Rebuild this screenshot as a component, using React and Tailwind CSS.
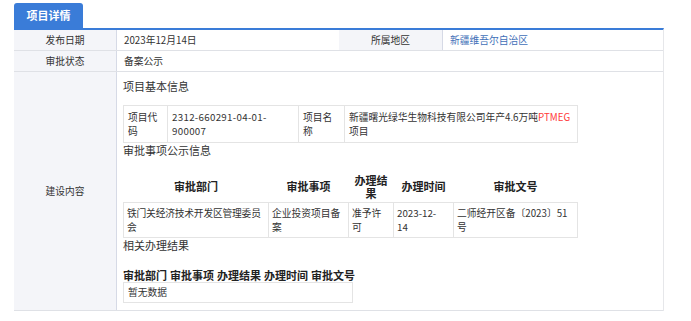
const font = { fontFamily: '"Noto Sans CJK SC", "Noto Sans", sans-serif' };

function Row({ label, children, className = '' }) {
  return (
    <div className={`flex border-b border-[#dfe1e6] ${className}`}>
      <div className="w-[103px] shrink-0 bg-[#f4f5f9] border-r border-[#d6dae6] flex items-center justify-center">
        {label}
      </div>
      {children}
    </div>
  );
}

export default function App() {
  return (
    <div className="bg-white min-h-[321px] pt-[3px] pl-[14px] text-[9.75px] text-[#333]" style={font}>
      <div className="w-[650px]">
        {/* tab */}
        <div className="w-[69px] h-[25px] rounded-t-[3px] bg-[#3a7cd8] text-white text-[11px] font-bold flex items-center justify-center">
          项目详情
        </div>

        <div className="border-t-2 border-[#3a7cd8] border-r border-r-[#e6e7ea]">
          <Row label="发布日期" className="h-[21px]">
            <div className="w-[222px] pl-[7px] flex items-center">2023年12月14日</div>
            <div className="w-[104px] bg-[#f4f5f9] border-r border-[#d6dae6] flex items-center justify-center">所属地区</div>
            <div className="flex-1 pl-[7px] flex items-center text-[#3f70b8]">新疆维吾尔自治区</div>
          </Row>

          <Row label="审批状态" className="h-[21px]">
            <div className="flex-1 pl-[7px] flex items-center">备案公示</div>
          </Row>

          <Row label="建设内容" className="h-[239px]">
            <div className="flex-1 pl-[6px] pt-[7px] flex flex-col">
              <p className="text-[11px] leading-[14px]">项目基本信息</p>

              <table className="mt-[12px] border-collapse table-fixed w-[455px] leading-[14px]">
                <tbody>
                  <tr>
                    <td className="w-[44px] border border-[#e4e4e4] px-[4px] py-[4px] align-top">项目代码</td>
                    <td className="w-[131px] border border-[#e4e4e4] px-[4px] py-[4px] align-top tracking-[0.3px]">2312-660291-04-01-<br />900007</td>
                    <td className="w-[46px] border border-[#e4e4e4] px-[4px] py-[4px] align-top">项目名称</td>
                    <td className="border border-[#e4e4e4] px-[4px] py-[4px] align-top">
                      新疆曙光绿华生物科技有限公司年产4.6万吨<span className="text-[#ff3b3b]">PTMEG</span>项目
                    </td>
                  </tr>
                </tbody>
              </table>

              <p className="text-[11px] leading-[14px]">审批事项公示信息</p>

              <table className="mt-[15px] border-collapse table-fixed w-[455px]">
                <thead>
                  <tr className="h-[30px] text-[11px] font-bold leading-[13px] text-[#222]">
                    <th className="w-[145px] px-[3px]">审批部门</th>
                    <th className="w-[80px] px-[3px]">审批事项</th>
                    <th className="w-[45px] px-[4px]">办理结果</th>
                    <th className="w-[60px] px-[3px]">办理时间</th>
                    <th className="px-[3px]">审批文号</th>
                  </tr>
                </thead>
                <tbody className="leading-[14px]">
                  <tr>
                    <td className="border border-[#e4e4e4] pl-[3px] pr-[1px] py-[3px] align-top whitespace-nowrap tracking-[-0.2px]">铁门关经济技术开发区管理委员<br />会</td>
                    <td className="border border-[#e4e4e4] px-[3px] py-[3px] align-top">企业投资项目备案</td>
                    <td className="border border-[#e4e4e4] px-[3px] py-[3px] align-top">准予许可</td>
                    <td className="border border-[#e4e4e4] px-[3px] py-[3px] align-top">2023-12-<br />14</td>
                    <td className="border border-[#e4e4e4] px-[3px] py-[3px] align-top">二师经开区备〔2023〕51号</td>
                  </tr>
                </tbody>
              </table>

              <p className="text-[11px] leading-[14px]">相关办理结果</p>

              <div className="mt-[16px] flex gap-[3px] text-[11px] font-bold leading-[14px] text-[#222]">
                <span>审批部门</span>
                <span>审批事项</span>
                <span>办理结果</span>
                <span>办理时间</span>
                <span>审批文号</span>
              </div>
              <div className="w-[230px] h-[21px] border border-[#e4e4e4] px-[4px] flex items-center">暂无数据</div>
            </div>
          </Row>
        </div>
      </div>
    </div>
  );
}
